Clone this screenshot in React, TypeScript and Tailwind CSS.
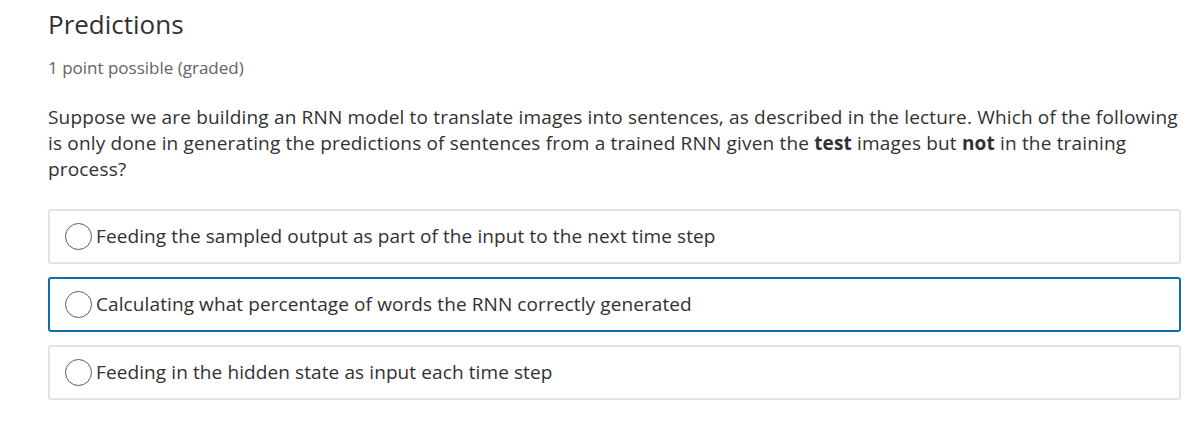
import React from "react";

const options = [
  "Feeding the sampled output as part of the input to the next time step",
  "Calculating what percentage of words the RNN correctly generated",
  "Feeding in the hidden state as input each time step",
];

export default function App() {
  return (
    <div
      className="w-[1201px] h-[424px] bg-white overflow-hidden pl-[48px] pr-[20px]"
      style={{ fontFamily: '"Open Sans", sans-serif' }}
    >
      <h2 className="pt-[8px] text-[26px] leading-[32px] text-[#313131] font-normal">Predictions</h2>
      <div className="mt-[18px] text-[17px] leading-[20px] text-[#646464]">1 point possible (graded)</div>
      <p className="mt-[26px] w-[1133px] text-[19px] tracking-[0.17px] leading-[26px] text-[#313131]">
        Suppose we are building an RNN model to translate images into sentences, as described in the lecture. Which of the
        following is only done in generating the predictions of sentences from a trained RNN given the{" "}
        <b className="font-bold">test</b> images but <b className="font-bold">not</b> in the training process?
      </p>
      <div className="mt-[27px] flex flex-col gap-[13px] w-[1133px]">
        {options.map((o, i) => (
          <div
            key={i}
            className={
              "h-[55px] rounded-[3px] border-2 flex items-center pl-[15px] gap-[4px] text-[19px] tracking-[0.1px] text-[#313131] " +
              (i === 1 ? "border-[#0e6fa8]" : "border-[#e4e4e4]")
            }
          >
            <span className="w-[27px] h-[27px] rounded-full border border-[#5a5a5a] bg-white shrink-0" />
            <span>{o}</span>
          </div>
        ))}
      </div>
    </div>
  );
}
